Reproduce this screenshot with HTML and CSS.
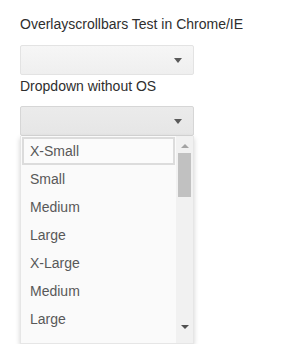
FILE: index.html
```html
<!DOCTYPE html>
<html lang="en">
<head>
    <meta charset="UTF-8">
    <meta name="viewport" content="width=device-width, initial-scale=1.0">
    <title>Overlayscrollbars Test</title>
    <link rel="stylesheet" href="styles.css">
</head>
<body>

<div class="label first">Overlayscrollbars Test in Chrome/IE</div>
<div class="dropdown">
    <span class="value"></span>
    <span class="arrow"></span>
</div>

<div class="label">Dropdown without OS</div>
<div class="dropdown active">
    <span class="value"></span>
    <span class="arrow"></span>
</div>

<!-- Popup list -->
<div class="popup">
    <ul class="list">
        <li class="item focused">X-Small</li>
        <li class="item">Small</li>
        <li class="item">Medium</li>
        <li class="item">Large</li>
        <li class="item">X-Large</li>
        <li class="item">Medium</li>
        <li class="item">Large</li>
    </ul>
    <div class="scrollbar">
        <span class="btn up"></span>
        <div class="track">
            <div class="thumb"></div>
        </div>
        <span class="btn down"></span>
    </div>
</div>

</body>
</html>
```

FILE: styles.css
```css
body {
    margin: 0;
    padding: 16px 20px 0 20px;
    font-family: "Liberation Sans", Arial, sans-serif;
    font-size: 14px;
    color: #2e2e2e;
    background-color: #fff;
}
.label {
    line-height: 16px;
    margin: 3px 0 12px 0;
}
.label.first {
    margin-top: 0;
    margin-bottom: 13px;
}
.dropdown {
    width: 172px;
    height: 28px;
    border: 1px solid #e3e3e3;
    border-radius: 2px;
    background: linear-gradient(#f6f6f6, #efefef);
    display: flex;
    align-items: center;
    justify-content: flex-end;
}
.dropdown.active {
    border-color: #d6d6d6;
    background: linear-gradient(#ebebeb, #e6e6e6);
}
.arrow {
    width: 0;
    height: 0;
    border-left: 4px solid transparent;
    border-right: 4px solid transparent;
    border-top: 5px solid #5a5a5a;
    margin-right: 11px;
    margin-top: 1px;
}
.popup {
    width: 172px;
    height: 207px;
    border: 1px solid #e6e6e6;
    border-top: none;
    background-color: #fafafa;
    box-shadow: 0 2px 5px rgba(0, 0, 0, 0.18);
    display: flex;
    overflow: hidden;
}
.list {
    list-style: none;
    margin: 0;
    padding: 1px 1px 0 1px;
    flex: 1;
}
.item {
    height: 24px;
    line-height: 24px;
    padding: 0 6px;
    border: 2px solid transparent;
    color: #585858;
}
.item.focused {
    border-color: #dcdcdc;
    background-color: #fbfbfb;
}
.scrollbar {
    width: 17px;
    background-color: #f1f1f1;
    display: flex;
    flex-direction: column;
    align-items: center;
}
.btn {
    width: 0;
    height: 0;
    border-left: 4px solid transparent;
    border-right: 4px solid transparent;
}
.btn.up {
    border-bottom: 4px solid #a3a3a3;
    margin-top: 8px;
}
.btn.down {
    border-top: 4px solid #505050;
    margin-bottom: 14px;
}
.track {
    flex: 1;
    width: 13px;
    padding-top: 5px;
}
.thumb {
    height: 44px;
    background-color: #c1c1c1;
}
```
